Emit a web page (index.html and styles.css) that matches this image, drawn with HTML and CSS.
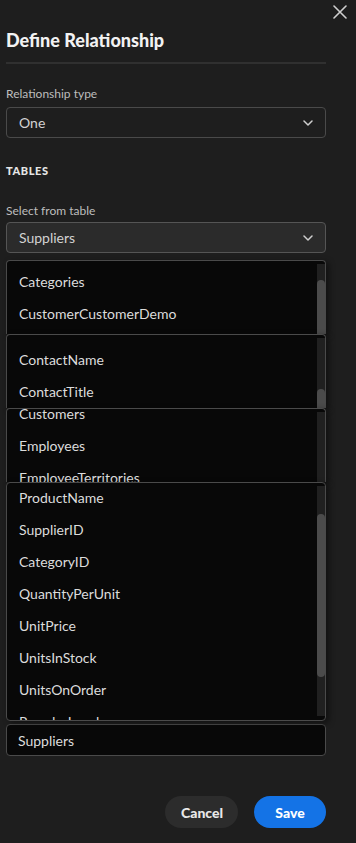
FILE: index.html
```html
<!DOCTYPE html>
<html lang="en">

<head>
    <meta charset="UTF-8">
    <title>Define Relationship</title>
    <link rel="stylesheet" href="styles.css">
</head>

<body>
    <div class="topbar">
        <button class="close" aria-label="Close">
            <svg width="14" height="14" viewBox="0 0 14 14">
                <path d="M1 1 L13 13 M13 1 L1 13" stroke="#cfcfcf" stroke-width="1.6" fill="none" stroke-linecap="round"/>
            </svg>
        </button>
    </div>

    <div class="dialog">
        <h1 class="title">Define Relationship</h1>
        <div class="divider"></div>

        <div class="label">Relationship type</div>
        <div class="select">
            <span>One</span>
            <svg class="chevron" width="10" height="6" viewBox="0 0 10 6">
                <path d="M1 1 L5 5 L9 1" stroke="#cfcfcf" stroke-width="1.5" fill="none" stroke-linecap="round" stroke-linejoin="round"/>
            </svg>
        </div>

        <div class="section">TABLES</div>

        <div class="label label-tight">Select from table</div>
        <div class="select open">
            <span>Suppliers</span>
            <svg class="chevron" width="10" height="6" viewBox="0 0 10 6">
                <path d="M1 1 L5 5 L9 1" stroke="#cfcfcf" stroke-width="1.5" fill="none" stroke-linecap="round" stroke-linejoin="round"/>
            </svg>
        </div>

        <div class="popovers">
            <div class="list list-1">
                <ul class="items">
                    <li>Categories</li>
                    <li>CustomerCustomerDemo</li>
                </ul>
                <div class="track"><div class="thumb"></div></div>
            </div>
            <div class="list list-2">
                <ul class="items">
                    <li>ContactName</li>
                    <li>ContactTitle</li>
                </ul>
                <div class="track"><div class="thumb"></div></div>
            </div>
            <div class="list list-3">
                <ul class="items">
                    <li>Customers</li>
                    <li>Employees</li>
                    <li>EmployeeTerritories</li>
                </ul>
                <div class="track"></div>
            </div>
            <div class="list list-4">
                <ul class="items">
                    <li>ProductName</li>
                    <li>SupplierID</li>
                    <li>CategoryID</li>
                    <li>QuantityPerUnit</li>
                    <li>UnitPrice</li>
                    <li>UnitsInStock</li>
                    <li>UnitsOnOrder</li>
                    <li>ReorderLevel</li>
                </ul>
                <div class="track"><div class="thumb"></div></div>
            </div>
        </div>

        <div class="input">Suppliers</div>

        <div class="footer">
            <button class="btn btn-secondary">Cancel</button>
            <button class="btn btn-primary">Save</button>
        </div>
    </div>
</body>

</html>
```

FILE: styles.css
```css
html,
body {
    margin: 0;
    background: #1e1e1e;
    color: #d6d6d6;
    font-family: Lato, "Open Sans", sans-serif;
}

.topbar {
    height: 28px;
    display: flex;
    justify-content: flex-end;
    align-items: flex-start;
    padding-right: 9px;
}

.close {
    margin-top: 5px;
    padding: 0;
    width: 14px;
    height: 14px;
    border: 0;
    background: none;
    display: flex;
}

.dialog {
    width: 320px;
    padding-left: 6px;
}

.title {
    margin: 0;
    font-size: 18px;
    line-height: 24px;
    font-weight: 900;
    color: #f2f2f2;
}

.divider {
    height: 2px;
    margin-top: 10px;
    background: #303030;
}

.label {
    margin-top: 22px;
    font-size: 12px;
    line-height: 16px;
    color: #bdbdbd;
}

.label-tight {
    margin-top: 25px;
}

.select {
    box-sizing: border-box;
    height: 31px;
    margin-top: 5px;
    padding: 0 12px 0 12px;
    border: 1px solid #4a4a4a;
    border-radius: 4px;
    display: flex;
    align-items: center;
    justify-content: space-between;
    font-size: 14px;
    color: #d2d2d2;
}

.select.open {
    margin-top: 3px;
    background: #2b2b2b;
    border-color: #555;
}

.section {
    margin-top: 26px;
    font-size: 11px;
    line-height: 14px;
    font-weight: 900;
    letter-spacing: 0.6px;
    color: #e6e6e6;
}

.popovers {
    margin-top: 7px;
    display: flex;
    flex-direction: column;
}

.list {
    position: relative;
    box-sizing: border-box;
    height: 74px;
    overflow: hidden;
    background: #080808;
    border: 1px solid #4a4a4a;
    border-bottom: 0;
    border-radius: 4px 4px 0 0;
    box-shadow: 3px 2px 6px rgba(0, 0, 0, 0.45);
}

.list-4 {
    height: 239px;
    border-bottom: 1px solid #4a4a4a;
    border-radius: 4px;
}

.items {
    list-style: none;
    margin: 0;
    padding: 0;
}

.items li {
    height: 32px;
    line-height: 32px;
    padding-left: 12px;
    font-size: 14px;
    color: #dcdcdc;
    white-space: nowrap;
}

.list-1 .items { margin-top: 5px; }
.list-2 .items { margin-top: 9px; }
.list-3 .items { margin-top: -11px; }
.list-4 .items { margin-top: -1px; }

.track {
    position: absolute;
    right: 0;
    width: 8px;
    top: 3px;
    bottom: 0;
    background: #202020;
}

.list-4 .track {
    bottom: 4px;
}

.thumb {
    position: absolute;
    left: 0;
    right: 0;
    background: #4b4b4b;
    border-radius: 4px;
}

.list-1 .thumb { top: 16px; bottom: -20px; }
.list-2 .thumb { top: 51px; bottom: -20px; }
.list-4 .thumb { top: 28px; height: 163px; }

.input {
    box-sizing: border-box;
    height: 32px;
    margin-top: 3px;
    padding-left: 11px;
    border: 1px solid #4a4a4a;
    border-radius: 4px;
    background: #080808;
    display: flex;
    align-items: center;
    font-size: 14px;
    color: #dcdcdc;
}

.footer {
    margin-top: 40px;
    display: flex;
    justify-content: flex-end;
    gap: 16px;
}

.btn {
    height: 32px;
    padding: 0 16px;
    border: 0;
    border-radius: 16px;
    font-family: Lato, "Open Sans", sans-serif;
    font-size: 14px;
    font-weight: 900;
    color: #e8e8e8;
}

.btn-secondary {
    width: 73px;
    background: #2c2c2c;
}

.btn-primary {
    width: 72px;
    background: #1473e6;
    color: #fff;
}
```
